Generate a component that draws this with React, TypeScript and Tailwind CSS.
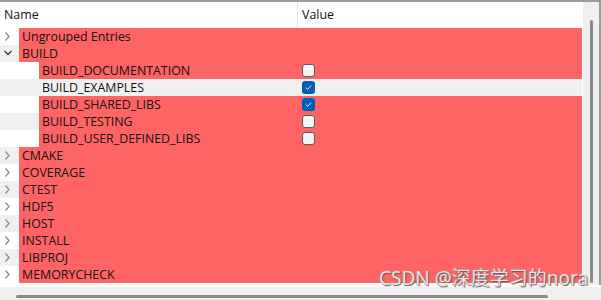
import React from "react";

type Row = {
  name: string;
  level: 0 | 1;
  expanded?: boolean;
  red: boolean;
  checkbox?: boolean;
  checked?: boolean;
};

const rows: Row[] = [
  { name: "Ungrouped Entries", level: 0, red: true },
  { name: "BUILD", level: 0, red: true, expanded: true },
  { name: "BUILD_DOCUMENTATION", level: 1, red: true, checkbox: true, checked: false },
  { name: "BUILD_EXAMPLES", level: 1, red: false, checkbox: true, checked: true },
  { name: "BUILD_SHARED_LIBS", level: 1, red: true, checkbox: true, checked: true },
  { name: "BUILD_TESTING", level: 1, red: true, checkbox: true, checked: false },
  { name: "BUILD_USER_DEFINED_LIBS", level: 1, red: true, checkbox: true, checked: false },
  { name: "CMAKE", level: 0, red: true },
  { name: "COVERAGE", level: 0, red: true },
  { name: "CTEST", level: 0, red: true },
  { name: "HDF5", level: 0, red: true },
  { name: "HOST", level: 0, red: true },
  { name: "INSTALL", level: 0, red: true },
  { name: "LIBPROJ", level: 0, red: true },
  { name: "MEMORYCHECK", level: 0, red: true },
];

function Chevron({ open }: { open?: boolean }) {
  if (open) {
    return (
      <svg width="19" height="17" viewBox="0 0 19 17" className="shrink-0">
        <path d="M4.5 6 L8 9.5 L11.5 6" fill="none" stroke="#3a3a3a" strokeWidth="1.3" />
      </svg>
    );
  }
  return (
    <svg width="19" height="17" viewBox="0 0 19 17" className="shrink-0">
      <path d="M5.5 4.5 L9 8.5 L5.5 12.5" fill="none" stroke="#8a8a8a" strokeWidth="1.3" />
    </svg>
  );
}

function Checkbox({ checked }: { checked?: boolean }) {
  if (checked) {
    return (
      <div className="w-[13px] h-[13px] rounded-[3px] bg-[#005fb8] flex items-center justify-center">
        <svg width="9" height="9" viewBox="0 0 9 9">
          <path d="M1.8 4.6 L3.6 6.3 L7.2 2.6" fill="none" stroke="#ffffff" strokeWidth="0.9" />
        </svg>
      </div>
    );
  }
  return <div className="w-[13px] h-[13px] rounded-[3px] border border-[#5c5c5c] bg-[#f4f4f4]" />;
}

export default function App() {
  return (
    <div
      className="relative w-[601px] h-[300px] bg-white flex flex-col border-t-2 border-[#9c9c9c] overflow-hidden"
      style={{ fontFamily: '"Open Sans", "Noto Sans", sans-serif' }}
    >
      <div className="flex h-[283px]">
        <div className="w-[583px] flex flex-col bg-white">
          <div className="h-[26px] flex text-[12.4px] text-[#111111]">
            <div className="w-[298px] pl-[4px] flex items-center border-r border-[#e5e5e5]">Name</div>
            <div className="pl-[4px] flex items-center">Value</div>
          </div>
          {rows.map((r, i) => {
            const alt = i % 2 === 1 ? "bg-[#f0f0f0]" : "bg-white";
            const fill = r.red ? "bg-[#ff6464]" : "bg-[#f0f0f0]";
            return (
              <div key={r.name} className="h-[17px] w-[582px] flex text-[12.4px] text-[#111111] leading-[17px]">
                <div className={`${r.level === 0 ? "w-[19px]" : "w-[39px]"} ${alt} shrink-0 flex`}>
                  {r.level === 0 && <Chevron open={r.expanded} />}
                </div>
                <div className={`flex-1 flex ${fill}`}>
                  <div className={`${r.level === 0 ? "w-[279px]" : "w-[259px]"} pl-[3px] whitespace-nowrap`}>
                    {r.name}
                  </div>
                  <div className="pl-[4px] flex items-center">
                    {r.checkbox && <Checkbox checked={r.checked} />}
                  </div>
                </div>
              </div>
            );
          })}
        </div>
        <div className="w-[16px] bg-[#f0f0f0] pt-[18px] pb-[2px] pl-[7px]">
          <div className="w-[2.5px] h-full bg-[#8a8a8a] rounded-full" />
        </div>
        <div className="w-[2px] bg-[#9c9c9c]" />
      </div>
      <div className="flex-1 bg-[#f0f0f0] flex items-start pt-[8px] pl-[16px] border-t-2 border-white">
        <div className="w-[532px] h-[2.5px] bg-[#8a8a8a] rounded-full" />
      </div>
      <div
        className="absolute left-[379px] top-[264px] text-[19px] leading-[24px] text-[#e6e6e6] whitespace-nowrap"
        style={{
          fontFamily: '"Noto Sans", "Noto Sans CJK SC", sans-serif',
          textShadow: "1px 1px 1px #5a5a5a, -0.5px -0.5px 0 #8a8a8a",
        }}
      >
        CSDN @深度学习的nora
      </div>
    </div>
  );
}
